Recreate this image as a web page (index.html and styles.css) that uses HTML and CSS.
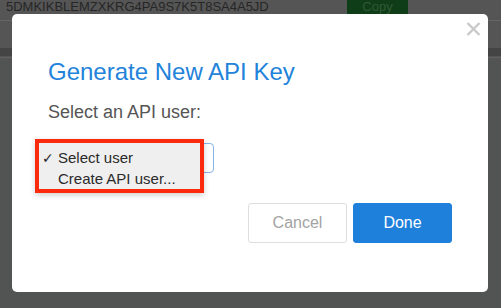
FILE: index.html
```html
<!DOCTYPE html>
<html>
<head>
<meta charset="utf-8">
<link rel="stylesheet" href="styles.css">
</head>
<body>
<div class="page">
  <div class="keyrow">
    <span class="keytext">5DMKIKBLEMZXKRG4PA9S7K5T8SA4A5JD</span>
    <span class="copy">Copy</span>
  </div>
  <div class="line1"></div>
  <div class="band"></div>
  <div class="line2"></div>
</div>

<div class="modal">
  <button class="close" aria-label="Close">
    <svg width="15" height="14" viewBox="0 0 15 14"><path d="M1.5 1 L13.5 13 M13.5 1 L1.5 13" stroke="#c9c9c9" stroke-width="2.4" fill="none"/></svg>
  </button>
  <h1 class="title">Generate New API Key</h1>
  <p class="label">Select an API user:</p>
  <div class="select"></div>
  <div class="menu">
    <div class="item"><span class="check">✓</span>Select user</div>
    <div class="item"><span class="check"></span>Create API user...</div>
  </div>
  <div class="actions">
    <button class="btn cancel">Cancel</button>
    <button class="btn done">Done</button>
  </div>
</div>
</body>
</html>
```

FILE: styles.css
```css
html, body {
  margin: 0;
  padding: 0;
}
body {
  width: 501px;
  height: 308px;
  overflow: hidden;
  background: #525453;
  font-family: "Liberation Sans", Arial, sans-serif;
  position: relative;
}
.page {
  background: #555555;
  height: 60px;
}
.keyrow {
  display: flex;
  align-items: flex-start;
  height: 20px;
  padding-left: 6px;
}
.keytext {
  width: 341px;
  font-size: 13px;
  line-height: 14px;
  color: #262626;
}
.copy {
  width: 61px;
  height: 14px;
  background: #0f3d18;
  color: #2f5a33;
  font-size: 13px;
  line-height: 14px;
  text-align: center;
}
.line1 {
  height: 1px;
  background: #666666;
}
.band {
  margin-top: 27px;
  height: 8px;
  background: #444444;
}
.line2 {
  margin-top: 1px;
  height: 1px;
  background: #616161;
}
.modal {
  position: absolute;
  left: 12px;
  top: 14px;
  width: 476px;
  height: 278px;
  box-sizing: border-box;
  background: #ffffff;
  border-radius: 5px;
  padding: 44px 36px 0 36px;
}
.close {
  position: absolute;
  top: 8px;
  right: 7px;
  padding: 0;
  border: 0;
  background: none;
  width: 15px;
  height: 14px;
  display: block;
}
.close svg { display: block; }
.title {
  margin: 0;
  font-size: 24px;
  font-weight: normal;
  line-height: 28px;
  color: #2383da;
}
.label {
  margin: 15px 0 0 0;
  font-size: 18px;
  line-height: 22px;
  color: #555555;
}
.select {
  margin-top: 20px;
  width: 166px;
  height: 30px;
  box-sizing: border-box;
  border: 1px solid #86b3ea;
  border-radius: 4px;
}
.menu {
  position: absolute;
  left: 23px;
  top: 125px;
  width: 169px;
  height: 54px;
  box-sizing: border-box;
  border: 4px solid #fc2a0d;
  background: #efefef;
  padding-top: 5px;
  box-shadow: 0 2px 6px rgba(0,0,0,0.2);
}
.item {
  display: flex;
  font-size: 15px;
  line-height: 20.5px;
  color: #2a2a2a;
  white-space: nowrap;
}
.check {
  width: 16px;
  margin-left: 3px;
  font-family: "DejaVu Sans", sans-serif;
  font-size: 14px;
  font-weight: bold;
}
.actions {
  display: flex;
  justify-content: flex-end;
  gap: 6px;
  margin-top: 30px;
}
.btn {
  width: 99px;
  height: 40px;
  box-sizing: border-box;
  border-radius: 3px;
  font-family: "Liberation Sans", Arial, sans-serif;
  font-size: 16px;
  padding: 0;
}
.cancel {
  background: #ffffff;
  border: 1px solid #dedede;
  color: #a3a3a3;
}
.done {
  background: #1e80da;
  border: 1px solid #1e80da;
  color: #ffffff;
}
```
